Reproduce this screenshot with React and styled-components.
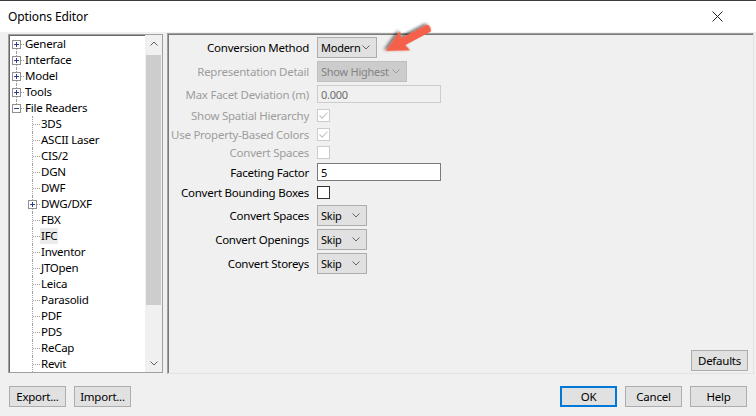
import React from "react";
import styled, { createGlobalStyle } from "styled-components";

const Global = createGlobalStyle`
  html, body { margin: 0; padding: 0; background: #f0f0f0; }
  body { font-family: "Noto Sans", "Liberation Sans", sans-serif; font-size: 11px; color: #000; }
  * { box-sizing: border-box; }
`;

const Window = styled.div`
  width: 756px;
  height: 416px;
  background: #f0f0f0;
  border-top: 1px solid #3c3c3c;
  display: flex;
  flex-direction: column;
  letter-spacing: -0.25px;
  overflow: hidden;
`;

const TitleBar = styled.div`
  height: 31px;
  background: #fff;
  display: flex;
  align-items: center;
  justify-content: space-between;
  padding: 0 33px 1px 8px;
  font-size: 12px;
  letter-spacing: -0.1px;
  color: #000;
`;

const Main = styled.div`
  display: flex;
  gap: 4px;
  padding: 1px 2px 0 8px;
  height: 342px;
`;

const TreePanel = styled.div`
  width: 155px;
  margin: 1px 0;
  background: #fff;
  border: 1px solid #a0a0a0;
  box-shadow: inset 1px 1px 0 #696969;
  display: flex;
  overflow: hidden;
`;

const TreeList = styled.div`
  flex: 1;
  padding: 1px 0 0 1px;
  overflow: hidden;
`;

const TreeRow = styled.div`
  height: 16px;
  display: flex;
  align-items: center;
  white-space: nowrap;
`;

const Indent = styled.div`
  width: ${(p) => p.$w}px;
  flex: none;
  height: 100%;
`;

const Cell = styled.div`
  position: relative;
  width: 14px;
  height: 100%;
  flex: none;
  &::before {
    content: "";
    display: ${(p) => (p.$v === "none" ? "none" : "block")};
    position: absolute;
    left: 6px;
    top: ${(p) => (p.$v === "bottom" ? "8px" : "0")};
    bottom: ${(p) => (p.$v === "top" ? "8px" : "0")};
    border-left: 1px dotted #a0a0a0;
  }
  &::after {
    content: "";
    position: absolute;
    left: 7px;
    width: 7px;
    top: 8px;
    border-top: 1px dotted #a0a0a0;
  }
`;

const Box = styled.div`
  position: absolute;
  left: 2px;
  top: 4px;
  width: 9px;
  height: 9px;
  background: #fff;
  border: 1px solid #919191;
  z-index: 1;
  &::before {
    content: "";
    position: absolute;
    left: 1px;
    right: 1px;
    top: 3px;
    height: 1px;
    background: #2c3e8c;
  }
  &::after {
    content: "";
    display: ${(p) => (p.$open ? "none" : "block")};
    position: absolute;
    top: 1px;
    bottom: 1px;
    left: 3px;
    width: 1px;
    background: #2c3e8c;
  }
`;

const Label = styled.span`
  margin-left: 0;
  padding: 0 1px;
  line-height: 16px;
  font-size: 11.5px;
  background: ${(p) => (p.$sel ? "#ebebeb" : "transparent")};
`;

const ScrollBar = styled.div`
  width: 17px;
  flex: none;
  background: #f0f0f0;
  display: flex;
  flex-direction: column;
  align-items: stretch;
`;

const ScrollArrow = styled.div`
  height: 17px;
  display: flex;
  align-items: center;
  justify-content: center;
  flex: none;
`;

const Thumb = styled.div`
  height: 250px;
  margin: 3px 1px 0;
  background: #cdcdcd;
`;

const Track = styled.div`
  flex: 1;
`;

const FormPanel = styled.div`
  flex: 1;
  position: relative;
  border-top: 1px solid #a0a0a0;
  border-left: 1px solid #a0a0a0;
  border-right: 1px solid #e3e3e3;
  border-bottom: 1px solid #e3e3e3;
  box-shadow: inset 1px 1px 0 #7a7a7a;
  padding: 1px 0 0 1px;
  display: flex;
  flex-direction: column;
`;

const FormRow = styled.div`
  height: ${(p) => p.$h}px;
  display: flex;
  align-items: center;
  gap: 8px;
  flex: none;
`;

const FieldLabel = styled.div`
  width: 140px;
  text-align: right;
  white-space: nowrap;
  font-size: 11.5px;
  color: ${(p) => (p.$disabled ? "#9d9d9d" : "#000")};
`;

const Select = styled.div`
  width: ${(p) => p.$w}px;
  height: 21px;
  background: ${(p) => (p.$disabled ? "#cccccc" : "#e1e1e1")};
  border: 1px solid ${(p) => (p.$disabled ? "#bfbfbf" : "#adadad")};
  color: ${(p) => (p.$disabled ? "#838383" : "#000")};
  display: flex;
  align-items: center;
  justify-content: space-between;
  padding: 0 6px 0 3px;
  font-size: 11px;
`;

const TextBox = styled.div`
  width: 124px;
  height: 18px;
  background: ${(p) => (p.$disabled ? "#f0f0f0" : "#fff")};
  border: 1px solid ${(p) => (p.$disabled ? "#cccccc" : "#7a7a7a")};
  color: ${(p) => (p.$disabled ? "#6d6d6d" : "#000")};
  display: flex;
  align-items: center;
  padding-left: 3px;
  font-size: 11px;
`;

const Check = styled.div`
  width: 13px;
  height: 13px;
  background: #fff;
  border: 1px solid ${(p) => (p.$disabled ? "#cccccc" : "#333")};
  display: flex;
  align-items: center;
  justify-content: center;
`;

const PanelFooter = styled.div`
  margin-top: auto;
  display: flex;
  justify-content: flex-end;
  padding: 0 5px 2px 0;
`;

const Button = styled.button`
  width: 57px;
  height: 21px;
  background: #e1e1e1;
  border: 1px solid ${(p) => (p.$primary ? "#0078d7" : "#adadad")};
  box-shadow: ${(p) => (p.$primary ? "inset 0 0 0 1px #0078d7" : "none")};
  font-family: "Noto Sans", "Liberation Sans", sans-serif;
  font-size: 11.5px;
  letter-spacing: -0.25px;
  color: #000;
  padding: 0;
  cursor: default;
`;

const Footer = styled.div`
  display: flex;
  align-items: center;
  padding: 12px 9px 0 9px;
  gap: 8px;
`;

const Spacer = styled.div`
  flex: 1;
`;

const ArrowOverlay = styled.svg`
  position: absolute;
  left: 0;
  top: -10px;
  overflow: visible;
  pointer-events: none;
`;

const Chevron = ({ color = "#555", up }) => (
  <svg width="8" height="5" viewBox="0 0 8 5">
    <path d={up ? "M0.5 4.5 L4 1 L7.5 4.5" : "M0.5 0.5 L4 4 L7.5 0.5"} fill="none" stroke={color} strokeWidth="1" />
  </svg>
);

const Tick = ({ color }) => (
  <svg width="11" height="11" viewBox="0 0 11 11">
    <path d="M1.5 5.5 L4.2 8.2 L9.5 2.5" fill="none" stroke={color} strokeWidth="1.1" />
  </svg>
);

const topItems = ["General", "Interface", "Model", "Tools"];
const children = ["3DS", "ASCII Laser", "CIS/2", "DGN", "DWF", "DWG/DXF", "FBX", "IFC", "Inventor", "JTOpen", "Leica", "Parasolid", "PDF", "PDS", "ReCap", "Revit"];

function Tree() {
  return (
    <TreePanel>
      <TreeList>
        {topItems.map((t, i) => (
          <TreeRow key={t}>
            <Indent $w={0} />
            <Cell $v={i === 0 ? "bottom" : "full"}>
              <Box />
            </Cell>
            <Label>{t}</Label>
          </TreeRow>
        ))}
        <TreeRow>
          <Indent $w={0} />
          <Cell $v="top">
            <Box $open />
          </Cell>
          <Label>File Readers</Label>
        </TreeRow>
        {children.map((c) => (
          <TreeRow key={c}>
            <Indent $w={16} />
            <Cell $v="full">{c === "DWG/DXF" && <Box />}</Cell>
            <Label $sel={c === "IFC"}>{c}</Label>
          </TreeRow>
        ))}
      </TreeList>
      <ScrollBar>
        <ScrollArrow>
          <Chevron up color="#606060" />
        </ScrollArrow>
        <Thumb />
        <Track />
        <ScrollArrow>
          <Chevron color="#606060" />
        </ScrollArrow>
      </ScrollBar>
    </TreePanel>
  );
}

function Form() {
  return (
    <FormPanel>
      <FormRow $h={24}>
        <FieldLabel>Conversion Method</FieldLabel>
        <Select $w={60}>
          <span>Modern</span>
          <Chevron color="#666" />
        </Select>
      </FormRow>
      <FormRow $h={24}>
        <FieldLabel $disabled>Representation Detail</FieldLabel>
        <Select $w={90} $disabled>
          <span>Show Highest</span>
          <Chevron color="#9a9a9a" />
        </Select>
      </FormRow>
      <FormRow $h={22}>
        <FieldLabel $disabled>Max Facet Deviation (m)</FieldLabel>
        <TextBox $disabled>0.000</TextBox>
      </FormRow>
      <FormRow $h={20}>
        <FieldLabel $disabled>Show Spatial Hierarchy</FieldLabel>
        <Check $disabled>
          <Tick color="#c4c4c4" />
        </Check>
      </FormRow>
      <FormRow $h={18}>
        <FieldLabel $disabled>Use Property-Based Colors</FieldLabel>
        <Check $disabled>
          <Tick color="#c4c4c4" />
        </Check>
      </FormRow>
      <FormRow $h={19}>
        <FieldLabel $disabled>Convert Spaces</FieldLabel>
        <Check $disabled />
      </FormRow>
      <FormRow $h={20}>
        <FieldLabel>Faceting Factor</FieldLabel>
        <TextBox>5</TextBox>
      </FormRow>
      <FormRow $h={21}>
        <FieldLabel>Convert Bounding Boxes</FieldLabel>
        <Check />
      </FormRow>
      <FormRow $h={24}>
        <FieldLabel>Convert Spaces</FieldLabel>
        <Select $w={50}>
          <span>Skip</span>
          <Chevron color="#666" />
        </Select>
      </FormRow>
      <FormRow $h={24}>
        <FieldLabel>Convert Openings</FieldLabel>
        <Select $w={50}>
          <span>Skip</span>
          <Chevron color="#666" />
        </Select>
      </FormRow>
      <FormRow $h={24}>
        <FieldLabel>Convert Storeys</FieldLabel>
        <Select $w={50}>
          <span>Skip</span>
          <Chevron color="#666" />
        </Select>
      </FormRow>
      <PanelFooter>
        <Button>Defaults</Button>
      </PanelFooter>
      <ArrowOverlay width="300" height="70" viewBox="0 0 300 70">
        <defs>
          <filter id="sh" x="-40%" y="-40%" width="180%" height="180%">
            <feDropShadow dx="1.5" dy="2" stdDeviation="1.5" floodColor="#000" floodOpacity="0.55" />
          </filter>
        </defs>
        <g transform="translate(261 4) rotate(152)" filter="url(#sh)">
          <path d="M0 -4 Q-3 0 0 4 L29 4 L27 11 L49 0 L27 -11 L29 -4 Z" fill="#f4604a" />
        </g>
      </ArrowOverlay>
    </FormPanel>
  );
}

export default function App() {
  return (
    <>
      <Global />
      <Window>
        <TitleBar>
          <span>Options Editor</span>
          <svg width="11" height="11" viewBox="0 0 11 11">
            <path d="M0.5 0.5 L10.5 10.5 M10.5 0.5 L0.5 10.5" stroke="#222" strokeWidth="1" />
          </svg>
        </TitleBar>
        <Main>
          <Tree />
          <Form />
        </Main>
        <Footer>
          <Button>Export...</Button>
          <Button>Import...</Button>
          <Spacer />
          <Button $primary>OK</Button>
          <Button>Cancel</Button>
          <Button>Help</Button>
        </Footer>
      </Window>
    </>
  );
}
